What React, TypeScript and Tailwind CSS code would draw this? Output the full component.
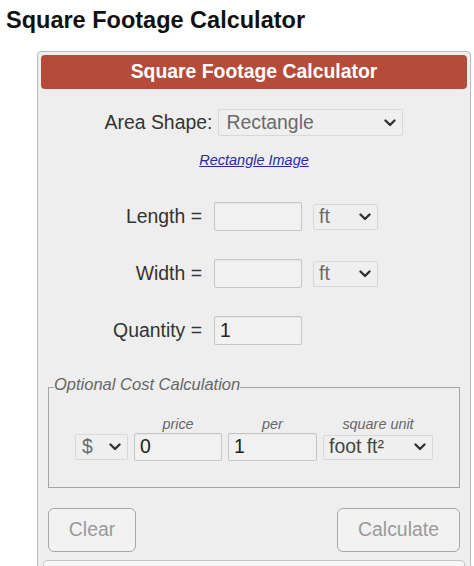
import React from "react";

const font = { fontFamily: '"Liberation Sans", Arial, Helvetica, sans-serif' };

function Chevron() {
  return (
    <svg width="12" height="8" viewBox="0 0 12 8" className="shrink-0">
      <polyline points="1.5,1.5 6,6 10.5,1.5" fill="none" stroke="#333" strokeWidth="2.4" strokeLinecap="round" strokeLinejoin="round" />
    </svg>
  );
}

function FakeSelect({ value, w, h, textColor = "text-[#6a6a6a]", pl = "pl-[5px]" }: { value: React.ReactNode; w: string; h: string; textColor?: string; pl?: string }) {
  return (
    <div className={`${w} ${h} ${pl} pr-[6px] flex items-center justify-between border border-[#d8d8d8] bg-[#efefef] rounded-[2px] ${textColor} text-[19.4px] leading-none shrink-0`}>
      <span>{value}</span>
      <Chevron />
    </div>
  );
}

function Box({ value, w, h }: { value: string; w: string; h: string }) {
  return (
    <div className={`${w} ${h} pl-[5px] flex items-center border border-[#c6c6c6] bg-[#f1f1f1] rounded-[2px] text-[#222] text-[19.4px] leading-none shrink-0 shadow-[inset_0_1px_1px_rgba(0,0,0,0.04)]`}>
      {value}
    </div>
  );
}

function Row({ label, value, unit, mt }: { label: string; value: string; unit: boolean; mt: string }) {
  return (
    <div className={`flex items-center ${mt}`}>
      <div className="w-[161px] text-right text-[#333] text-[19.4px] leading-none">{label}</div>
      <div className="ml-[12px]">
        <Box value={value} w="w-[88px]" h="h-[29px]" />
      </div>
      {unit && (
        <div className="ml-[11px]">
          <FakeSelect value="ft" w="w-[65px]" h="h-[26px]" />
        </div>
      )}
    </div>
  );
}

export default function App() {
  return (
    <div className="bg-white w-[474px] min-h-[566px] overflow-hidden" style={font}>
      <div className="h-[51px] pt-[7px] pl-[6px] text-[23.5px] leading-[27px] font-bold text-[#111]">
        Square Footage Calculator
      </div>
      <div className="ml-[37px] w-[434px] border border-[#bcbcbc] rounded-[4px] bg-[#eeeeee] p-[3px]">
        <div className="h-[34px] rounded-[4px] bg-[#b64b39] flex items-center justify-center text-white font-bold text-[19.4px] leading-none">
          Square Footage Calculator
        </div>

        <div className="mt-[20px] flex items-center justify-center">
          <span className="text-[#333] text-[19.4px] leading-none">Area Shape:</span>
          <div className="ml-[6px]">
            <FakeSelect value="Rectangle" w="w-[185px]" h="h-[27px]" pl="pl-[7px]" />
          </div>
        </div>

        <div className="mt-[15px] h-[18px] flex items-center justify-center">
          <a className="italic underline text-[#2a2aa6] text-[14.5px] leading-none cursor-pointer">Rectangle Image</a>
        </div>

        <Row label="Length =" value="" unit mt="mt-[33px]" />
        <Row label="Width =" value="" unit mt="mt-[28px]" />
        <Row label="Quantity =" value="1" unit={false} mt="mt-[28px]" />

        <fieldset className="mx-[7px] mt-[30px] border border-[#a6a6a6] px-[5px] pb-[26px]">
          <legend className="italic text-[#666] text-[16.5px] leading-[19px] pb-[6px]">Optional Cost Calculation</legend>
          <div className="mt-[16px] flex justify-center">
            <div className="grid grid-cols-[53px_88px_89px_110px] gap-x-[6px] items-center">
              <div />
              <div className="text-center italic text-[#666] text-[14.4px] leading-[17px]">price</div>
              <div className="text-center italic text-[#666] text-[14.4px] leading-[17px]">per</div>
              <div className="text-center italic text-[#666] text-[14.4px] leading-[17px]">square unit</div>
              <FakeSelect value="$" w="w-[53px]" h="h-[26px]" pl="pl-[6px]" />
              <Box value="0" w="w-[88px]" h="h-[28px]" />
              <Box value="1" w="w-[89px]" h="h-[28px]" />
              <FakeSelect value={<>foot ft²</>} w="w-[110px]" h="h-[25px]" textColor="text-[#444]" />
            </div>
          </div>
        </fieldset>

        <div className="mx-[7px] mt-[20px] flex justify-between">
          <button className="w-[88px] h-[44px] border border-[#a8a8a8] rounded-[6px] bg-[#f2f2f2] text-[#9a9a9a] text-[19.4px] leading-none">
            Clear
          </button>
          <button className="w-[123px] h-[44px] border border-[#a8a8a8] rounded-[6px] bg-[#f2f2f2] text-[#9a9a9a] text-[19.4px] leading-none">
            Calculate
          </button>
        </div>

        <div className="mx-[2px] mt-[8px] h-[40px] rounded-[4px] border border-[#c4c4c4] bg-[#f7f7f7]" />
      </div>
    </div>
  );
}
